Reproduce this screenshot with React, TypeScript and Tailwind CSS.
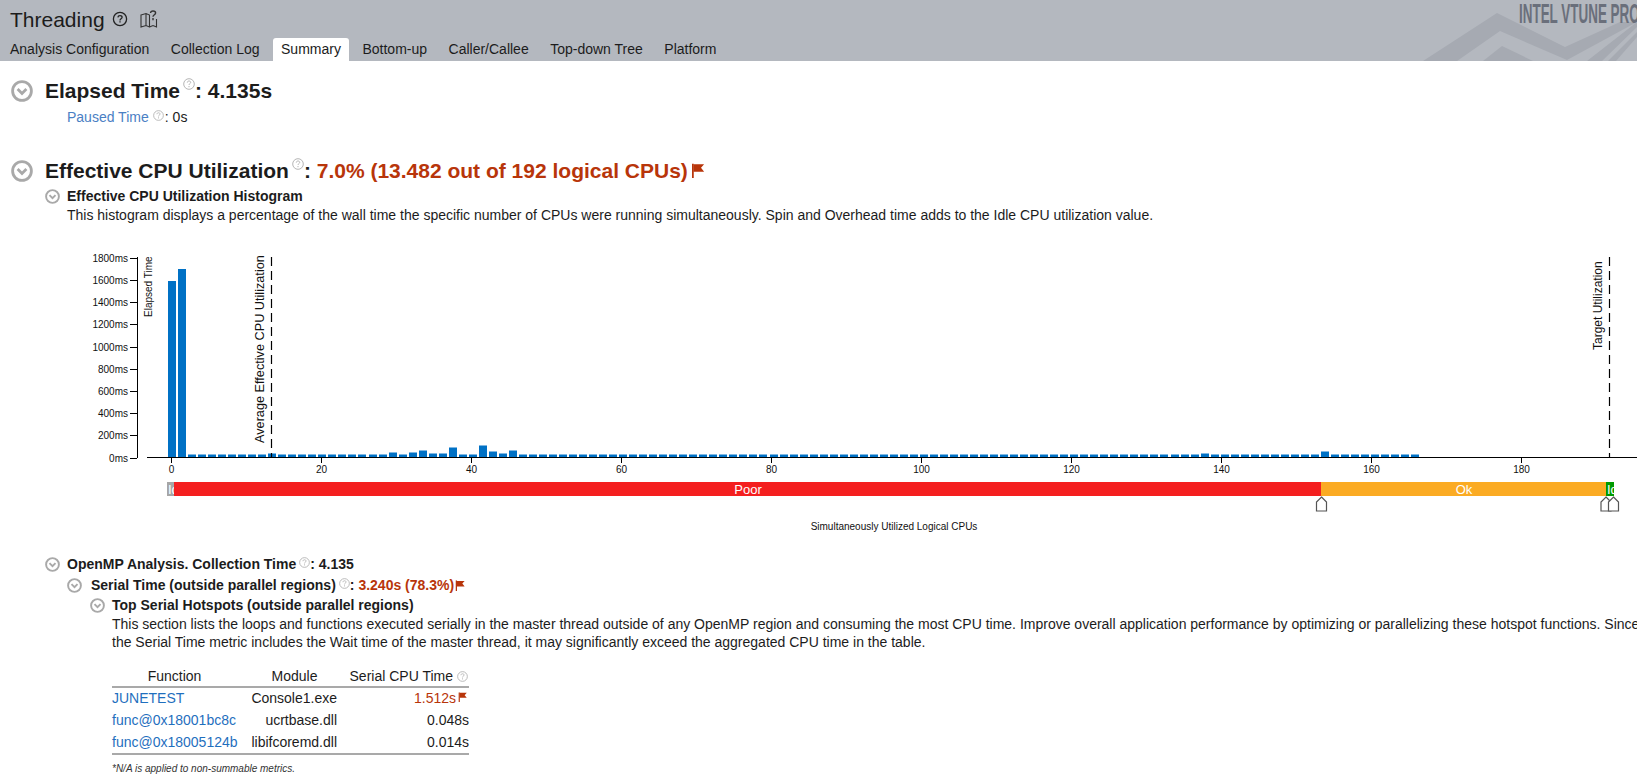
const tabs = ['Analysis Configuration', 'Collection Log', 'Summary', 'Bottom-up', 'Caller/Callee', 'Top-down Tree', 'Platform'];

const tallBars: Record<number, number> = {
  0: 176, 1: 188, 10: 3.5, 22: 4.5, 24: 4.5, 25: 6.5, 26: 3.5, 27: 3.5, 28: 9.5,
  31: 11.5, 32: 5.5, 33: 3.5, 34: 6.5, 103: 3.5, 115: 5.5,
};

const bars = Array.from({ length: 125 }, (_, i) => ({
  x: Math.round(168 + i * 10.025),
  h: tallBars[i] ?? 2.5,
}));

const yTicks = [0, 200, 400, 600, 800, 1000, 1200, 1400, 1600, 1800];
const xTicks = [0, 20, 40, 60, 80, 100, 120, 140, 160, 180];

function Chevron({ size, width = 2.8 }: { size: number; width?: number }) {
  return (
    <svg width={size} height={size} viewBox="0 0 22 22" className="shrink-0">
      <circle cx="11" cy="11" r="9.4" fill="#fff" stroke="#a9a9a9" strokeWidth={width} />
      <path d="M6.6 9 11 13.4 15.4 9" fill="none" stroke="#a9a9a9" strokeWidth={width} />
    </svg>
  );
}

function Help({ size = 11, className = '' }: { size?: number; className?: string }) {
  return (
    <svg width={size} height={size} viewBox="0 0 12 12" className={`shrink-0 ${className}`}>
      <circle cx="6" cy="6" r="5.3" fill="none" stroke="#b5b5b5" strokeWidth="1" />
      <path d="M4.3 4.6C4.4 3.5 5.1 3 6 3c1 0 1.7.6 1.7 1.4 0 1.2-1.7 1.2-1.7 2.6M6 8v1.2" fill="none" stroke="#b5b5b5" strokeWidth="1" />
    </svg>
  );
}

function Flag({ size = 12, className = '' }: { size?: number; className?: string }) {
  return (
    <svg width={size} height={size} viewBox="0 0 12 12" className={`shrink-0 ${className}`}>
      <path d="M1.5 0.5V12" stroke="#b8350a" strokeWidth="1.4" />
      <path d="M2 1H10.5L8 3.8 10.5 7H2Z" fill="#b8350a" />
    </svg>
  );
}

function Marker({ x }: { x: number }) {
  return <path d={`M${x} 497 L${x + 5} 502 V511 H${x - 5} V502 Z`} fill="#fff" stroke="#555" strokeWidth="1.2" />;
}

function Histogram() {
  return (
    <svg width="1637" height="300" viewBox="0 240 1637 300" className="block font-['Liberation_Sans',Arial,sans-serif]">
      {bars.map((b) => (
        <rect key={b.x} x={b.x} y={457 - b.h} width="8" height={b.h} fill="#0071c5" />
      ))}
      <path d="M137.5 257V458M147 457.5H1637" stroke="#000" strokeWidth="1" fill="none" />
      {yTicks.map((v, i) => {
        const y = Math.round(457.5 - i * 22.2) + 0.5;
        return (
          <g key={v}>
            <path d={`M130 ${y}H137`} stroke="#000" />
            <text x="128" y={y + 3.5} textAnchor="end" fontSize="10" fill="#111">{v}ms</text>
          </g>
        );
      })}
      {xTicks.map((v) => {
        const x = Math.round(171 + v * 7.5) + 0.5;
        return (
          <g key={v}>
            <path d={`M${x} 458V463`} stroke="#000" />
            <text x={x} y="473" textAnchor="middle" fontSize="10" fill="#111">{v}</text>
          </g>
        );
      })}
      <text transform="translate(152 317) rotate(-90)" fontSize="10" fill="#111">Elapsed Time</text>
      <path d="M271.5 257V457" stroke="#000" strokeWidth="1.2" strokeDasharray="9 5" />
      <text transform="translate(264 443) rotate(-90)" fontSize="12.7" fill="#111">Average Effective CPU Utilization</text>
      <path d="M1609.5 257V457" stroke="#000" strokeWidth="1.2" strokeDasharray="9 5" />
      <text transform="translate(1602 350) rotate(-90)" fontSize="12" fill="#111">Target Utilization</text>
      <rect x="167" y="482" width="7" height="14" fill="#a6a6a6" />
      <rect x="174" y="482" width="1147" height="14" fill="#f41f1f" />
      <rect x="1321" y="482" width="285" height="14" fill="#fbab23" />
      <rect x="1606" y="482" width="8" height="14" fill="#009a00" />
      <svg x="167" y="482" width="7" height="14">
        <text x="1" y="11.5" fontSize="13" fill="#fff">Idle</text>
      </svg>
      <text x="748" y="493.5" textAnchor="middle" fontSize="13" fill="#fff">Poor</text>
      <text x="1464" y="493.5" textAnchor="middle" fontSize="13" fill="#fff">Ok</text>
      <svg x="1606" y="482" width="8" height="14">
        <text x="1" y="11.5" fontSize="13" fill="#fff">Ideal</text>
      </svg>
      <Marker x={1321.5} />
      <Marker x={1606} />
      <Marker x={1613.5} />
      <text x="894" y="530" textAnchor="middle" fontSize="10" fill="#111">Simultaneously Utilized Logical CPUs</text>
    </svg>
  );
}

export default function App() {
  return (
    <div className="w-[1637px] h-[783px] overflow-hidden bg-white text-[#1c1c1c] font-['Liberation_Sans',Arial,sans-serif]">
      <header className="relative h-[61px] bg-[#b4b8bf] overflow-hidden">
        <svg width="337" height="61" viewBox="0 0 337 61" className="absolute right-0 top-0">
          <path d="M123 61 197 13 265 47 320 22H337L267 60 200 31 157 61Z" fill="#a6aab2" />
          <path d="M183 61 202 46 233 61Z" fill="#a6aab2" />
          <path d="M287 61 337 22V27L302 61ZM308 61 337 32V37L316 61Z" fill="#a6aab2" />
        </svg>
        <div className="absolute left-[1519px] top-[-2px] origin-left scale-x-[0.48] whitespace-nowrap text-[28px] leading-[32px] font-bold text-[#6a6f7b]">
          INTEL VTUNE PROFILER
        </div>
        <div className="relative flex items-center h-[38px] pl-[10px]">
          <span className="text-[21px] leading-none">Threading</span>
          <svg width="16" height="16" viewBox="0 0 16 16" className="ml-[7px]">
            <circle cx="8" cy="8" r="6.6" fill="none" stroke="#222" strokeWidth="1.3" />
            <path d="M5.9 6.4C6 5.1 6.9 4.6 8 4.6c1.2 0 2.1.7 2.1 1.7 0 1.5-2.1 1.4-2.1 3.1M8 10.2v1.4" fill="none" stroke="#222" strokeWidth="1.3" />
          </svg>
          <svg width="18" height="18" viewBox="0 0 18 18" className="ml-[12px]">
            <path d="M1 5 6 3.5 9.5 5V17L6 15.5 1 17ZM6 3.5V15.5M9.5 17 13 15.5 16.5 17V9" fill="none" stroke="#333" strokeWidth="1.1" />
            <path d="M10.5 3C10.7 1.6 11.8 1 13 1c1.5 0 2.6.8 2.6 2 0 1.7-2.6 1.8-2.6 3.8M13 8v2.2" fill="none" stroke="#333" strokeWidth="1.4" />
          </svg>
        </div>
        <nav className="relative flex h-[23px] pl-[2px] gap-[5.5px]">
          {tabs.map((t) => (
            <div
              key={t}
              className={`px-2 text-[14px] leading-[22px] rounded-t-[3px] ${t === 'Summary' ? 'bg-white' : ''}`}
            >
              {t}
            </div>
          ))}
        </nav>
      </header>

      <main>
        <div className="flex items-center h-[24px] mt-[18px] pl-[11px]">
          <Chevron size={22} />
          <span className="ml-[12px] text-[21px] font-bold">Elapsed Time</span>
          <Help size={12} className="ml-[3px] -mt-[14px]" />
          <span className="text-[21px] font-bold">: 4.135s</span>
        </div>
        <div className="flex items-center h-[20px] mt-[4px] pl-[67px] text-[14px]">
          <span className="text-[#4a80c4]">Paused Time</span>
          <Help size={11} className="ml-[4px] -mt-[4px]" />
          <span className="ml-[1px]">:</span>
          <span className="ml-[4px]">0s</span>
        </div>

        <div className="flex items-center h-[24px] mt-[32px] pl-[11px]">
          <Chevron size={22} />
          <span className="ml-[12px] text-[21px] font-bold">Effective CPU Utilization</span>
          <Help size={12} className="ml-[3px] -mt-[14px]" />
          <span className="text-[21px] font-bold">:&nbsp;</span>
          <span className="text-[21px] font-bold text-[#b8350a]">7.0% (13.482 out of 192 logical CPUs)</span>
          <Flag size={15} className="ml-[3px] -mt-[2px]" />
        </div>
        <div className="flex items-center h-[20px] mt-[3px] pl-[45px]">
          <Chevron size={15} />
          <span className="ml-[7px] text-[14px] font-bold">Effective CPU Utilization Histogram</span>
        </div>
        <p className="h-[18px] pl-[67px] text-[14px] leading-[18px] whitespace-nowrap">
          This histogram displays a percentage of the wall time the specific number of CPUs were running simultaneously. Spin and Overhead time adds to the Idle CPU utilization value.
        </p>

        <div className="mt-[16px]">
          <Histogram />
        </div>

        <div className="flex items-center h-[20px] mt-[14px] pl-[45px] text-[14px] font-bold">
          <Chevron size={15} />
          <span className="ml-[7px]">OpenMP Analysis. Collection Time</span>
          <Help size={11} className="ml-[3px] -mt-[4px]" />
          <span>: 4.135</span>
        </div>
        <div className="flex items-center h-[22px] pl-[67px] text-[14px] font-bold">
          <Chevron size={15} />
          <span className="ml-[9px]">Serial Time (outside parallel regions)</span>
          <Help size={11} className="ml-[3px] -mt-[4px]" />
          <span>:&nbsp;</span>
          <span className="text-[#b8350a]">3.240s (78.3%)</span>
          <Flag size={11} className="ml-[1px]" />
        </div>
        <div className="flex items-center h-[19px] pl-[90px] text-[14px] font-bold">
          <Chevron size={15} />
          <span className="ml-[7px]">Top Serial Hotspots (outside parallel regions)</span>
        </div>
        <div className="pl-[112px] text-[14px] leading-[18px] whitespace-nowrap">
          <p>This section lists the loops and functions executed serially in the master thread outside of any OpenMP region and consuming the most CPU time. Improve overall application performance by optimizing or parallelizing these hotspot functions. Since</p>
          <p>the Serial Time metric includes the Wait time of the master thread, it may significantly exceed the aggregated CPU time in the table.</p>
        </div>

        <div className="ml-[112px] mt-[12px] w-[357px] text-[14px]">
          <div className="grid grid-cols-[125px_100px_132px] h-[25px] leading-[26px] border-b-2 border-[#a9a9a9]">
            <div className="text-center">Function</div>
            <div className="pl-[15px] text-center">Module</div>
            <div className="flex items-center justify-end gap-[4px]">
              Serial CPU Time
              <Help size={11} className="mr-[1px]" />
            </div>
          </div>
          <div className="border-b-2 border-[#a9a9a9]">
            <div className="grid grid-cols-[125px_100px_132px] h-[22px] leading-[20px]">
              <div className="text-[#1f6fbe]">JUNETEST</div>
              <div className="text-right">Console1.exe</div>
              <div className="flex items-center justify-end gap-[2px] pr-[1px] text-[#b8350a] h-[20px]">
                1.512s
                <Flag size={10} className="-mt-[2px]" />
              </div>
            </div>
            <div className="grid grid-cols-[125px_100px_132px] h-[22px] leading-[20px]">
              <div className="text-[#1f6fbe]">func@0x18001bc8c</div>
              <div className="text-right">ucrtbase.dll</div>
              <div className="text-right">0.048s</div>
            </div>
            <div className="grid grid-cols-[125px_100px_132px] h-[21px] leading-[20px]">
              <div className="text-[#1f6fbe] whitespace-nowrap">func@0x18005124b</div>
              <div className="text-right">libifcoremd.dll</div>
              <div className="text-right">0.014s</div>
            </div>
          </div>
          <p className="mt-[7px] text-[10px] italic leading-[14px] text-[#333]">*N/A is applied to non-summable metrics.</p>
        </div>
      </main>
    </div>
  );
}
